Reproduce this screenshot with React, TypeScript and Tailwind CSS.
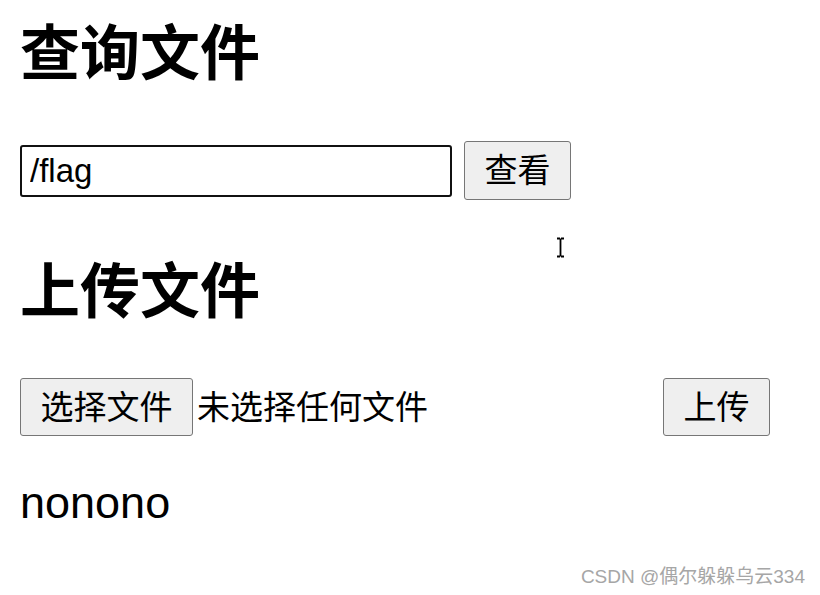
import React from "react";

const font = "font-['Liberation_Sans','Noto_Sans_CJK_SC',sans-serif]";

export default function App() {
  return (
    <div className={`relative w-[820px] h-[595px] overflow-hidden bg-white text-black pl-5 ${font}`}>
      <h1 className="pt-[25px] text-[60px] leading-[60px] font-bold">查询文件</h1>
      <div className="mt-[56px] flex items-center gap-3">
        <input
          defaultValue="/flag"
          className="w-[432px] h-[52px] border-2 border-[#111] rounded-[3px] px-2 text-[33px] outline-none"
        />
        <button className="w-[107px] h-[59px] bg-[#efefef] border border-[#767676] rounded-[3px] text-[33px] leading-none">
          查看
        </button>
      </div>
      <h1 className="mt-[63px] text-[60px] leading-[60px] font-bold">上传文件</h1>
      <div className="mt-[55px] flex items-center">
        <button className="w-[173px] h-[58px] bg-[#efefef] border border-[#767676] rounded-[3px] text-[33px] leading-none">
          选择文件
        </button>
        <span className="ml-1 w-[466px] text-[33px] leading-none">未选择任何文件</span>
        <button className="w-[107px] h-[58px] bg-[#efefef] border border-[#767676] rounded-[3px] text-[33px] leading-none">
          上传
        </button>
      </div>
      <p className="mt-[44px] text-[45px] leading-[45px]">nonono</p>
      <svg className="absolute left-[556px] top-[237px]" width="9" height="21" viewBox="0 0 9 21">
        <path d="M1 1.5h3M5 1.5h3M4.5 1.5v18M1 19.5h3M5 19.5h3" stroke="#000" strokeWidth="1.8" fill="none" />
      </svg>
      <div className="absolute right-[15px] top-[565px] text-[19px] leading-[24px] text-[#a6a6a6]">
        CSDN @偶尔躲躲乌云334
      </div>
    </div>
  );
}
